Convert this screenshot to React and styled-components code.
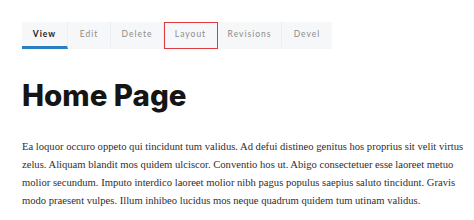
import styled, { createGlobalStyle } from "styled-components";

const GlobalStyle = createGlobalStyle`
  body {
    margin: 0;
    background: #fff;
  }
`;

const Page = styled.div`
  padding: 22px 10px 0 22px;
`;

const Tabs = styled.ul`
  display: flex;
  list-style: none;
  margin: 0;
  padding: 0;
  width: 310px;
  background: #f6f7f9;
`;

const Tab = styled.li`
  box-sizing: border-box;
  width: ${(p) => p.w}px;
  height: 27px;
  display: flex;
  align-items: center;
  justify-content: center;
  font-family: "Lato", sans-serif;
  font-size: 8.5px;
  letter-spacing: 1px;
  color: ${(p) => (p.active ? "#222" : "#8c8c8c")};
  font-weight: ${(p) => (p.active ? 700 : 400)};
  border-right: 1px solid #eceef1;
  border-bottom: 3px solid ${(p) => (p.active ? "#2a7fc1" : "transparent")};
  outline: ${(p) => (p.focused ? "1.5px solid #e0393e" : "none")};
  outline-offset: -1.5px;
  &:last-child {
    border-right: none;
  }
`;

const Title = styled.h1`
  margin: 28px 0 0 0;
  font-family: "Inter", sans-serif;
  font-weight: 800;
  font-size: 29.5px;
  color: #151515;
  line-height: 36px;
`;

const Body = styled.p`
  margin: 25px 0 0 0;
  font-family: "Liberation Serif", serif;
  font-size: 10.6px;
  line-height: 18px;
  color: #2e2e2e;
`;

const tabs = [
  { label: "View", w: 46, active: true },
  { label: "Edit", w: 43 },
  { label: "Delete", w: 53 },
  { label: "Layout", w: 54, focused: true },
  { label: "Revisions", w: 64 },
  { label: "Devel", w: 50 },
];

export default function App() {
  return (
    <>
      <GlobalStyle />
      <Page>
        <Tabs>
          {tabs.map((t) => (
            <Tab key={t.label} w={t.w} active={t.active} focused={t.focused}>
              {t.label}
            </Tab>
          ))}
        </Tabs>
        <Title>Home Page</Title>
        <Body>
          Ea loquor occuro oppeto qui tincidunt tum validus. Ad defui distineo
          genitus hos proprius sit velit virtus zelus. Aliquam blandit mos
          quidem ulciscor. Conventio hos ut. Abigo consectetuer esse laoreet
          metuo molior secundum. Imputo interdico laoreet molior nibh pagus
          populus saepius saluto tincidunt. Gravis modo praesent vulpes. Illum
          inhibeo lucidus mos neque quadrum quidem tum utinam validus.
        </Body>
      </Page>
    </>
  );
}
